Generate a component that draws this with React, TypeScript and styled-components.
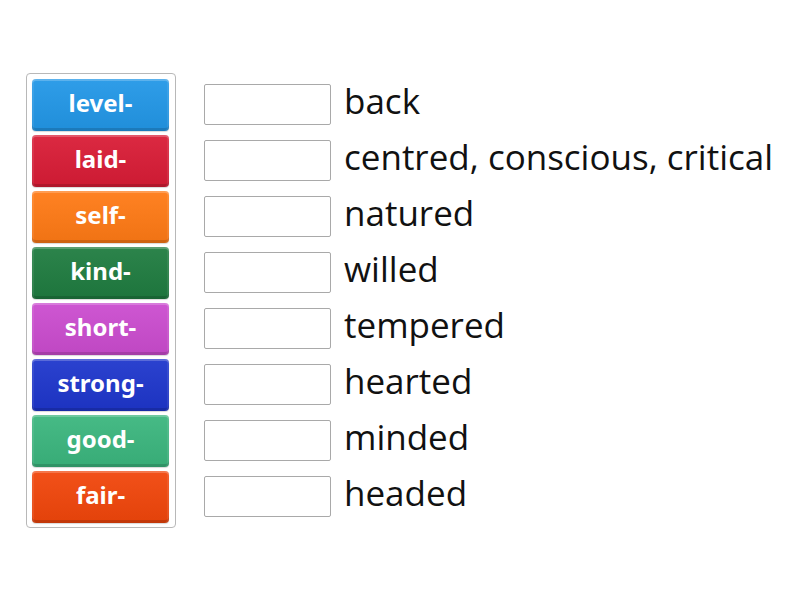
import styled, { createGlobalStyle } from 'styled-components';

const GlobalStyle = createGlobalStyle`
  html, body {
    margin: 0;
    padding: 0;
    background: #fff;
  }
`

type Pair = {
  prefix: string
  color: string
  ending: string
}

const pairs: Pair[] = [
  { prefix: 'level-', color: '#2297e7', ending: 'back' },
  { prefix: 'laid-', color: '#d91c36', ending: 'centred, conscious, critical' },
  { prefix: 'self-', color: '#ff7a15', ending: 'natured' },
  { prefix: 'kind-', color: '#1f7c40', ending: 'willed' },
  { prefix: 'short-', color: '#cb4ccf', ending: 'tempered' },
  { prefix: 'strong-', color: '#1e36cc', ending: 'hearted' },
  { prefix: 'good-', color: '#3bb67e', ending: 'minded' },
  { prefix: 'fair-', color: '#f1460b', ending: 'headed' },
];

const Page = styled.div`
  display: flex;
  align-items: flex-start;
  padding: 73px 0 0 26px;
  width: 800px;
  height: 600px;
  box-sizing: border-box;
  font-family: "Open Sans", "Noto Sans", sans-serif;
`

const Tray = styled.div`
  display: flex;
  flex-direction: column;
  gap: 4px;
  width: 150px;
  box-sizing: border-box;
  padding: 5px 6px 4px 5px;
  border: 1px solid #b8b8b8;
  border-radius: 4px;
`

const Tile = styled.div<{ $color: string }>`
  height: 52px;
  box-sizing: border-box;
  padding-bottom: 6px;
  border-radius: 4px;
  display: flex;
  align-items: center;
  justify-content: center;
  color: #fff;
  font-family: "Noto Sans", sans-serif;
  font-weight: 700;
  font-size: 24px;
  background: ${p => p.$color};
  background-image: linear-gradient(rgba(255,255,255,0.06), rgba(0,0,0,0.06));
  box-shadow:
    inset 0 2px 0 rgba(255,255,255,0.22),
    inset 2px 0 0 rgba(255,255,255,0.08),
    inset -2px 0 0 rgba(255,255,255,0.08),
    inset 0 -3px 0 rgba(0,0,0,0.14),
    0 1px 1px rgba(0,0,0,0.15);
`

const Targets = styled.div`
  display: flex;
  flex-direction: column;
  gap: 15px;
  margin-left: 28px;
  padding-top: 11px;
`

const Row = styled.div`
  display: flex;
  align-items: center;
  height: 41px;
`

const Slot = styled.div`
  width: 127px;
  height: 41px;
  box-sizing: border-box;
  border: 1px solid #a9a9a9;
  border-radius: 2px;
  background: #fff;
  flex-shrink: 0;
`

const Ending = styled.span`
  margin-left: 13px;
  margin-top: -9px;
  font-size: 35px;
  color: #111;
  white-space: nowrap;
  line-height: 41px;
`

export default function App() {
  return (
    <Page>
      <GlobalStyle />
      <Tray>
        {pairs.map(p => (
          <Tile key={p.prefix} $color={p.color}>{p.prefix}</Tile>
        ))}
      </Tray>
      <Targets>
        {pairs.map(p => (
          <Row key={p.ending}>
            <Slot />
            <Ending>{p.ending}</Ending>
          </Row>
        ))}
      </Targets>
    </Page>
  )
}
